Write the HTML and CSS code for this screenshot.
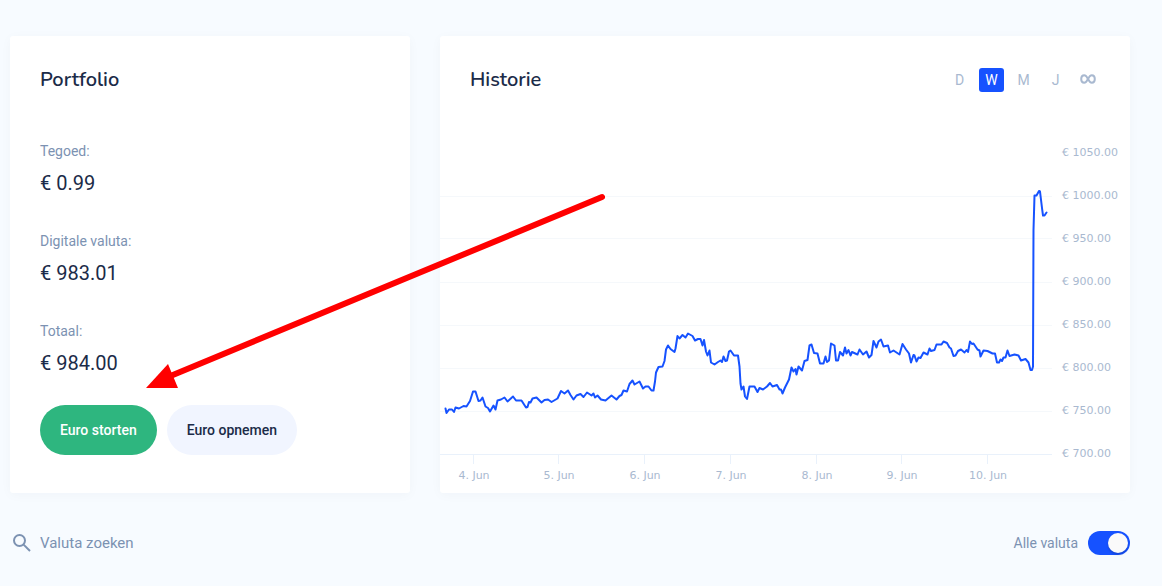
FILE: index.html
```html
<!DOCTYPE html>
<html lang="nl">
<head>
<meta charset="utf-8">
<meta name="viewport" content="width=device-width, initial-scale=1">
<title>Portfolio</title>
<link rel="stylesheet" href="styles.css">
</head>
<body>
<main class="page">
  <div class="cards">
    <section class="card portfolio">
      <h2 class="card-title">Portfolio</h2>
      <dl class="balances">
        <div class="balance"><dt>Tegoed:</dt><dd>€ 0.99</dd></div>
        <div class="balance"><dt>Digitale valuta:</dt><dd>€ 983.01</dd></div>
        <div class="balance"><dt>Totaal:</dt><dd>€ 984.00</dd></div>
      </dl>
      <div class="actions">
        <button type="button" class="btn btn-primary">Euro storten</button>
        <button type="button" class="btn btn-secondary">Euro opnemen</button>
      </div>
    </section>

    <section class="card history">
      <header class="history-head">
        <h2 class="card-title">Historie</h2>
        <div class="ranges">
          <button type="button" class="range">D</button>
          <button type="button" class="range active">W</button>
          <button type="button" class="range">M</button>
          <button type="button" class="range">J</button>
          <button type="button" class="range" aria-label="Alles">
            <svg class="infinity" viewBox="0 0 16 12" aria-hidden="true"><path d="M8 5C6.800 2.600 5.600 1.300 4.200 1.300 2.400 1.300 1.200 2.900 1.200 5S2.400 8.700 4.200 8.700C5.600 8.700 6.800 7.400 8 5S10.400 1.300 11.800 1.300C13.600 1.300 14.800 2.900 14.800 5S13.600 8.700 11.800 8.700C10.400 8.700 9.200 7.400 8 5Z"/></svg>
          </button>
        </div>
      </header>
      <svg class="chart" viewBox="0 130 690 363" role="img" aria-label="Waarde per dag">
        <path class="grid" d="M0 196.500H612M0 238.500H612M0 282.500H612M0 325.500H612M0 368.500H612M0 411.500H612"/>
        <path class="axis" d="M0 454.500H612M33.500 455V464M118.500 455V464M204.500 455V464M290.500 455V464M376.500 455V464M461.500 455V464M547.500 455V464"/>
        <g class="tick-label">
          <text x="622" y="156">€ 1050.00</text>
          <text x="622" y="199">€ 1000.00</text>
          <text x="622" y="242">€ 950.00</text>
          <text x="622" y="285">€ 900.00</text>
          <text x="622" y="328">€ 850.00</text>
          <text x="622" y="371">€ 800.00</text>
          <text x="622" y="414">€ 750.00</text>
          <text x="622" y="457">€ 700.00</text>
        </g>
        <g class="tick-label day">
          <text x="34" y="479">4. Jun</text>
          <text x="119" y="479">5. Jun</text>
          <text x="205" y="479">6. Jun</text>
          <text x="291" y="479">7. Jun</text>
          <text x="377" y="479">8. Jun</text>
          <text x="462" y="479">9. Jun</text>
          <text x="548" y="479">10. Jun</text>
        </g>
        <polyline class="series" points="5.5,408.5 6.5,413 9,409.5 12,409.5 14,412 15.5,407.5 19,408.5 23.5,406 26.5,406.5 30,401 33,391.5 35.5,391.5 38.5,401 40.5,400.5 42.5,397.5 45.5,406.5 48,408 50,411.5 53.5,405.5 55.5,409.5 57.5,400.5 61,399.5 64.5,397.5 67.5,401.5 73,396.5 76,400.5 81.5,400.5 86,407.5 87.5,407 89,402 90.5,402.5 92.5,398.5 96.5,397.5 101.5,402.5 104.5,400 108,399.5 111.5,402 117.5,398.5 121,391 124.5,393.5 128,390.5 130.5,395 133.5,399.5 136.5,395.5 140.5,394 143.5,397 147,392.5 151.5,395.5 153.5,393.5 155,397.5 157.5,395.5 161,399.5 165.5,400.5 171.5,395.5 176.5,399.5 179.5,396 181.5,395 183.5,390.5 187,391.5 189.5,384 192.5,380.5 194.5,384.5 199.5,381.5 203,388.5 205.5,386.5 208.5,386.5 211.5,390.5 213.5,390.5 215,381.5 216,372.5 218.5,367 222.5,366.5 224.5,361 226,349.5 228,345.5 230.5,349 234.5,352 235.5,348.5 237.5,336 239.5,338.5 242.5,335 245.5,337.5 248,333.5 252.5,336 255,340.5 258,339 260.5,339 262.5,345.5 264,340 266,351.5 267.5,355.5 269.5,350.5 271,362.5 274.5,364.5 278,362 280.5,360.5 282,362 283.5,356.5 285.5,361 287,360.5 289,351.5 290.5,350.5 294,355.5 298,355.5 299.5,366.5 300.5,383.5 301.5,389.5 303.5,386.5 305,396.5 307,399 309.5,386.5 314.5,386.5 317.5,392 319.5,388 323,389.5 327,386.5 330,383 332.5,386.5 337,385 339.5,389.5 341,389.5 342.5,393.5 345,387.5 349,379.5 351.5,367.5 353.5,371.5 355.5,369 356.5,374.5 358.5,366.5 362,370.5 364.5,361 367.5,360 369.5,345.5 371.5,344.5 374,353 377.5,353.5 380,363.5 383.5,363.5 385.5,356.5 387,362 389,360.5 391,343.5 394.5,345.5 396,360.5 398,360.5 400,352 403,355.5 405,347.5 406.5,353.5 408.5,350 410.5,355.5 412,352 417.5,354.5 419.5,349.5 423,354.5 426.5,351.5 429,357.5 431.5,355 433.5,341 436.5,347.5 438.5,341.5 441,339.5 443.5,346.5 448,345.5 450,352.5 453.5,350.5 459.5,354.5 462.5,344 466,349.5 469,353.5 471,362.5 473.5,355 474.5,355.5 476.5,361.5 478.5,357.5 480.5,358 483.5,352.5 487.5,354.5 489.5,348.5 491,351 494.5,350 496.5,344.5 501.5,344.5 503.5,341.5 507,343 509.5,347.5 511,348.5 513.5,356 515.5,355.5 518,351 521,349.5 524.5,352.5 526.5,350 528,352 530,341.5 532,344 533.5,343.5 537.5,349.5 539.5,350.5 540.5,356.5 543.5,350.5 547.5,351 552.5,353.5 555,353.5 557,362.5 559,362.5 560.5,359.5 562,361 563.5,357.5 565.5,357.5 567.5,350.5 569.5,356 574.5,354.5 578.5,355.5 581,360.5 585.5,359 588.5,362.5 590.5,370 592,370 593,366.5 593.5,230 594.5,195.5 596.5,195.5 599,191 600,191.5 602,208 603,215.5 604.5,215.5 606.5,212.5"/>
      </svg>
    </section>
  </div>

  <div class="toolbar">
    <label class="search">
      <svg class="search-icon" viewBox="0 0 18 18" aria-hidden="true"><circle cx="6.500" cy="6.500" r="5.500"/><path d="M10.600 10.600L17 17"/></svg>
      <input class="search-input" type="text" placeholder="Valuta zoeken" aria-label="Valuta zoeken">
    </label>
    <label class="switch">
      <span>Alle valuta</span>
      <input class="toggle" type="checkbox" role="switch" checked>
    </label>
  </div>

  <svg class="pointer" width="620" height="400" viewBox="0 0 620 400" aria-hidden="true">
    <path class="pointer-shaft" d="M602 197L168 377"/>
    <path class="pointer-head" d="M146 388L168 364L178 388Z"/>
  </svg>
</main>
</body>
</html>
```

FILE: styles.css
```css
* {
  box-sizing: border-box;
}

body {
  margin: 0;
  background: #f7fbff;
  color: #1b2b48;
  font-family: Roboto, "Liberation Sans", sans-serif;
  font-size: 14px;
  line-height: 20px;
}

button,
input {
  font: inherit;
}

.page {
  position: relative;
  padding: 36px 32px 30px 10px;
}

.cards {
  display: grid;
  grid-template-columns: 40fr 69fr;
  gap: 30px;
}

.card {
  background: #fff;
  border-radius: 3px;
  box-shadow: 0 2px 12px rgba(27, 43, 72, 0.03);
}

.card-title {
  margin: 0;
  font-family: Nunito, Lato, sans-serif;
  font-size: 20px;
  font-weight: 600;
  line-height: 26px;
}

.portfolio {
  padding: 31px 30px 38px;
}

.balances {
  display: grid;
  gap: 34px;
  margin: 48px 0 28px;
}

.balance {
  display: grid;
  gap: 8px;
}

.balance dt {
  color: #7c92b2;
}

.balance dd {
  margin: 0;
  font-size: 20px;
  line-height: 28px;
}

.actions {
  display: flex;
  gap: 10px;
}

.btn {
  height: 50px;
  padding: 0 20px;
  border: 0;
  border-radius: 25px;
  font-weight: 500;
  cursor: pointer;
}

.btn-primary {
  background: #2eb67f;
  color: #fff;
}

.btn-secondary {
  background: #f1f5ff;
  color: #1b2b48;
}

.history {
  display: flex;
  flex-direction: column;
}

.history-head {
  display: flex;
  justify-content: space-between;
  align-items: center;
  padding: 31px 30px 0;
  margin-bottom: 37px;
}

.ranges {
  display: flex;
  gap: 7px;
}

.range {
  display: flex;
  align-items: center;
  justify-content: center;
  width: 25px;
  height: 24px;
  padding: 0;
  border: 0;
  border-radius: 3px;
  background: none;
  color: #a9b9d0;
  cursor: pointer;
}

.range.active {
  background: #1652ff;
  color: #fff;
}

.infinity {
  width: 16px;
  height: 12px;
  fill: none;
  stroke: currentColor;
  stroke-width: 2;
}

.chart {
  display: block;
  width: 100%;
}

.grid,
.axis {
  fill: none;
  stroke: #f5f8fb;
}

.axis {
  stroke: #e9f1fb;
}

.tick-label {
  fill: #a9b9d0;
  font-family: "DejaVu Sans", sans-serif;
  font-size: 11px;
}

.day {
  text-anchor: middle;
}

.series {
  fill: none;
  stroke: #1652ff;
  stroke-width: 2;
  stroke-linejoin: round;
  stroke-linecap: round;
}

.toolbar {
  display: flex;
  justify-content: space-between;
  align-items: center;
  margin-top: 38px;
}

.search,
.switch {
  display: flex;
  align-items: center;
  gap: 10px;
  color: #7c92b2;
}

.search {
  gap: 9px;
  padding-left: 3px;
}

.search-icon {
  width: 18px;
  height: 18px;
  fill: none;
  stroke: currentColor;
  stroke-width: 2;
}

.search-input {
  padding: 0;
  border: 0;
  outline: 0;
  background: none;
  color: inherit;
  font-size: 15px;
}

.search-input::placeholder {
  color: #7c92b2;
  opacity: 1;
}

.toggle {
  display: flex;
  align-items: center;
  justify-content: flex-end;
  width: 42px;
  height: 24px;
  margin: 0;
  padding: 2px;
  border-radius: 12px;
  background: #1652ff;
  appearance: none;
  cursor: pointer;
}

.toggle::before {
  content: "";
  width: 20px;
  height: 20px;
  border-radius: 50%;
  background: #fafafa;
  box-shadow: 0 2px 2px rgba(0, 0, 0, 0.15);
}

.toggle:not(:checked) {
  justify-content: flex-start;
  background: #a9b9d0;
}

/* Arrow drawn over both cards */
.pointer {
  position: absolute;
  top: 0;
  left: 0;
  pointer-events: none;
}

.pointer-shaft {
  stroke: #f00;
  stroke-width: 6;
  stroke-linecap: round;
}

.pointer-head {
  fill: #f00;
}
```
